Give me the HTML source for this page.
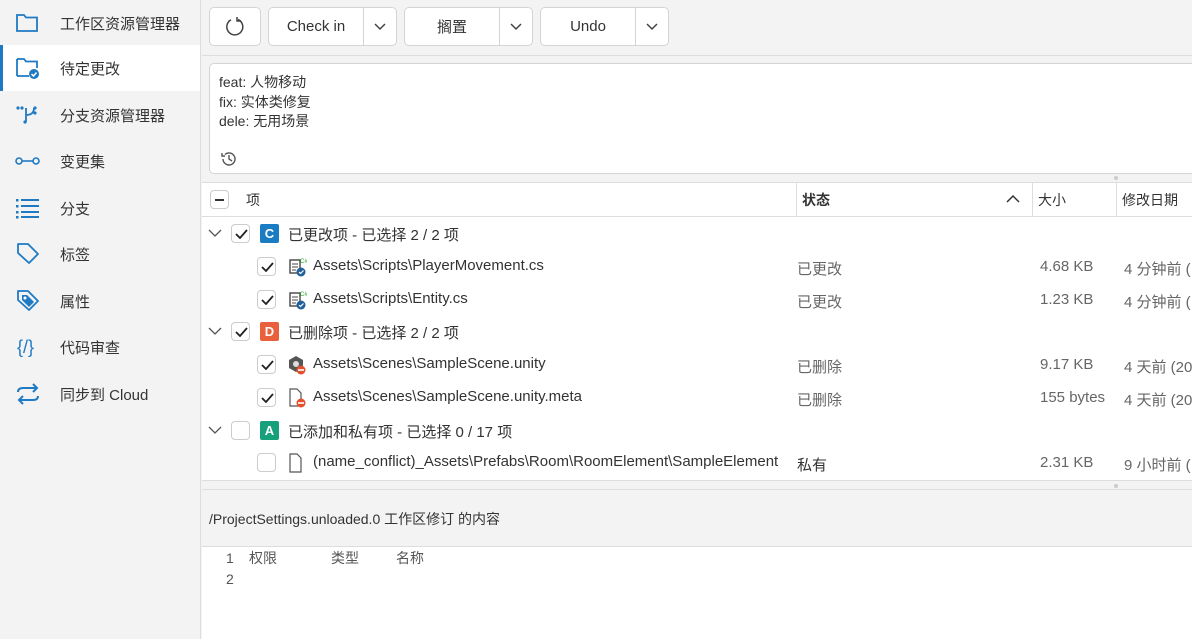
<!DOCTYPE html><html><head><meta charset="utf-8"><style>
*{box-sizing:border-box;margin:0;padding:0}
body{width:1192px;height:639px;overflow:hidden;background:#f3f3f3;font-family:"Liberation Sans","Noto Sans CJK SC",sans-serif;font-size:14px;color:#333;position:relative}
.a{position:absolute}
.side{left:0;top:0;width:201px;height:639px;background:#f3f3f3;border-right:1px solid #ddd}
.it{position:absolute;left:0;width:200px;height:46px;display:flex;align-items:center}
.it span{position:absolute;left:60px;font-size:15px;color:#333}
.it svg{position:absolute;left:15px}
.btn{position:absolute;top:7px;height:39px;background:#fff;border:1px solid #d4d4d4;border-radius:5px;display:flex;align-items:center;font-size:15px;color:#333}
.btn .l{flex:1;text-align:center}
.btn .r{width:33px;height:100%;border-left:1px solid #d4d4d4;display:flex;align-items:center;justify-content:center}
.cb{position:absolute;width:19px;height:19px;border:1px solid #ccc;border-radius:4px;background:#fff}
.row{position:absolute;left:202px;width:990px;height:33px}
.row .t{position:absolute;top:7px;font-size:15px;color:#333;white-space:nowrap}
.g{color:#666!important;font-size:15px!important;top:8px!important}
.badge{position:absolute;top:7px;width:19px;height:19px;color:#fff;font-weight:bold;font-size:13px;text-align:center;line-height:19px;border-radius:2px}
</style></head><body>
<div class="a side">
<div class="it" style="top:0"><svg width="24" height="22" viewBox="0 0 24 22"><path d="M2 3h7l2 2.5h11V19H2z" fill="none" stroke="#1f7ac4" stroke-width="1.8"/></svg><span>工作区资源管理器</span></div>
<div class="it" style="top:45px;background:#fff"><div class="a" style="left:0;top:0;width:3px;height:46px;background:#1f7ac4"></div><svg width="26" height="24" viewBox="0 0 26 24"><path d="M2 3h7l2 2.5h11V12M14 20H2z" fill="none" stroke="#1f7ac4" stroke-width="1.8"/><path d="M2 3v17" stroke="#1f7ac4" stroke-width="1.8"/><circle cx="19" cy="18" r="5" fill="#1f7ac4"/><path d="M16.5 18l2 2 3-3.5" fill="none" stroke="#fff" stroke-width="1.5"/></svg><span>待定更改</span></div>
<div class="it" style="top:92px"><svg width="24" height="24" viewBox="0 0 24 24"><g fill="#1f7ac4"><circle cx="3" cy="5" r="1.6"/><circle cx="7" cy="5" r="1.6"/><circle cx="20" cy="5" r="1.6"/><circle cx="20" cy="10" r="1.6"/><circle cx="10" cy="19" r="1.6"/></g><path d="M11 5v14M11 12c5 0 8-2 8-7" fill="none" stroke="#1f7ac4" stroke-width="1.8"/></svg><span>分支资源管理器</span></div>
<div class="it" style="top:138px"><svg width="26" height="12" viewBox="0 0 26 12"><circle cx="4" cy="6" r="3" fill="none" stroke="#1f7ac4" stroke-width="1.6"/><circle cx="21" cy="6" r="3" fill="none" stroke="#1f7ac4" stroke-width="1.6"/><path d="M7 6h11" stroke="#1f7ac4" stroke-width="1.6"/></svg><span>变更集</span></div>
<div class="it" style="top:185px"><svg width="26" height="22" viewBox="0 0 26 22"><g fill="#1f7ac4"><rect x="1" y="2" width="2.5" height="2.5"/><rect x="1" y="8" width="2.5" height="2.5"/><rect x="1" y="14" width="2.5" height="2.5"/><rect x="1" y="19" width="2.5" height="2.5"/><rect x="6" y="2" width="18" height="2"/><rect x="6" y="8" width="18" height="2"/><rect x="6" y="14" width="18" height="2"/><rect x="6" y="19" width="18" height="2"/></g></svg><span>分支</span></div>
<div class="it" style="top:231px"><svg width="26" height="26" viewBox="0 0 26 26"><path d="M3 3h10l10 10-9 9L3 12z" fill="none" stroke="#1f7ac4" stroke-width="1.8" stroke-linejoin="round"/></svg><span>标签</span></div>
<div class="it" style="top:278px"><svg width="26" height="26" viewBox="0 0 26 26"><path d="M3 3h10l10 10-9 9L3 12z" fill="none" stroke="#1f7ac4" stroke-width="1.8" stroke-linejoin="round"/><path d="M7 7h5l7 7-5 5-7-7z" fill="#1f7ac4"/><circle cx="10" cy="10" r="1.5" fill="#fff"/></svg><span>属性</span></div>
<div class="it" style="top:324px"><span style="left:17px;color:#1f7ac4;font-size:18px">{/}</span><span>代码审查</span></div>
<div class="it" style="top:371px"><svg width="26" height="22" viewBox="0 0 26 22"><path d="M3 9c0-3 2-4 5-4h14M18 1l4 4-4 4M23 13c0 3-2 4-5 4H4M8 13l-4 4 4 4" fill="none" stroke="#1f7ac4" stroke-width="2"/></svg><span>同步到 Cloud</span></div>
</div>
<div class="a" style="left:202px;top:55px;width:990px;height:1px;background:#ddd"></div>
<div class="btn" style="left:209px;width:52px;justify-content:center"><svg width="22" height="22" viewBox="0 0 22 22"><path d="M14 3.5A8 8 0 1 1 7 3.8" fill="none" stroke="#444" stroke-width="1.5"/><path d="M13 1v4h4" fill="none" stroke="#444" stroke-width="1.5"/></svg></div>
<div class="btn" style="left:268px;width:129px"><span class="l">Check in</span><span class="r"><svg width="12" height="8"><path d="M1 1l5 5 5-5" fill="none" stroke="#444" stroke-width="1.5"/></svg></span></div>
<div class="btn" style="left:404px;width:129px"><span class="l">搁置</span><span class="r"><svg width="12" height="8"><path d="M1 1l5 5 5-5" fill="none" stroke="#444" stroke-width="1.5"/></svg></span></div>
<div class="btn" style="left:540px;width:129px"><span class="l">Undo</span><span class="r"><svg width="12" height="8"><path d="M1 1l5 5 5-5" fill="none" stroke="#444" stroke-width="1.5"/></svg></span></div>
<div class="a" style="left:209px;top:63px;width:1000px;height:111px;background:#fff;border:1px solid #d4d4d4;border-radius:5px"></div>
<div class="a" style="left:219px;top:73px;font-size:14px;line-height:19.5px;color:#333">feat: 人物移动<br>fix: 实体类修复<br>dele: 无用场景</div>
<svg class="a" style="left:220px;top:150px" width="18" height="18" viewBox="0 0 18 18"><path d="M3 9a6 6 0 1 0 2-4.5" fill="none" stroke="#555" stroke-width="1.4"/><path d="M2 3v3h3M9 5v4l3 2" fill="none" stroke="#555" stroke-width="1.4"/></svg>
<div class="a" style="left:202px;top:182px;width:990px;height:298px;background:#fff;border-top:1px solid #ddd"></div>
<div class="a" style="left:1114px;top:176px;width:4px;height:4px;border-radius:2px;background:#ccc"></div>
<div class="a" style="left:202px;top:216px;width:990px;height:1px;background:#ddd"></div>
<div class="a" style="left:796px;top:183px;width:1px;height:33px;background:#ddd"></div>
<div class="a" style="left:1032px;top:183px;width:1px;height:33px;background:#ddd"></div>
<div class="a" style="left:1116px;top:183px;width:1px;height:33px;background:#ddd"></div>
<div class="cb" style="left:210px;top:190px"><div class="a" style="left:4px;top:8px;width:9px;height:2px;background:#333"></div></div>
<div class="a" style="left:246px;top:190px;font-size:14px">项</div>
<div class="a" style="left:802px;top:190px;font-size:14px;font-weight:bold">状态</div>
<svg class="a" style="left:1006px;top:194px" width="14" height="9"><path d="M1 8l6-6 6 6" fill="none" stroke="#333" stroke-width="1.5"/></svg>
<div class="a" style="left:1038px;top:190px;font-size:14px">大小</div>
<div class="a" style="left:1122px;top:190px;font-size:14px">修改日期</div>

<div class="row" style="top:217px"><svg class="a" style="left:6px;top:12px" width="14" height="8"><path d="M1 1l6 6 6-6" fill="none" stroke="#555" stroke-width="1.3"/></svg><div class="cb" style="left:29px;top:7px"></div><svg class="a" style="left:33px;top:12px" width="13" height="10"><path d="M1 5l4 4 7-8" fill="none" stroke="#222" stroke-width="1.8"/></svg><div class="badge" style="left:58px;background:#1a7dc4">C</div><span class="t" style="left:86px">已更改项 - 已选择 2 / 2 项</span></div>
<div class="row" style="top:250px"><div class="cb" style="left:55px;top:7px"></div><svg class="a" style="left:59px;top:12px" width="13" height="10"><path d="M1 5l4 4 7-8" fill="none" stroke="#222" stroke-width="1.8"/></svg><svg class="a" style="left:87px;top:7px" width="18" height="20"><rect x="1" y="3" width="10" height="13" fill="#fff" stroke="#444" stroke-width="1.4"/><path d="M3 7h6M3 10h6M3 13h4" stroke="#444"/><text x="11" y="6" font-size="6" fill="#2a2">C#</text><circle cx="12" cy="15" r="4.5" fill="#1f5f9a"/><path d="M10 15l1.5 1.5 3-3" fill="none" stroke="#fff" stroke-width="1.2"/></svg><span class="t" style="left:111px">Assets\Scripts\PlayerMovement.cs</span><span class="t g" style="left:595px">已更改</span><span class="t g" style="left:838px">4.68 KB</span><span class="t g" style="left:922px">4 分钟前 (</span></div>
<div class="row" style="top:283px"><div class="cb" style="left:55px;top:7px"></div><svg class="a" style="left:59px;top:12px" width="13" height="10"><path d="M1 5l4 4 7-8" fill="none" stroke="#222" stroke-width="1.8"/></svg><svg class="a" style="left:87px;top:7px" width="18" height="20"><rect x="1" y="3" width="10" height="13" fill="#fff" stroke="#444" stroke-width="1.4"/><path d="M3 7h6M3 10h6M3 13h4" stroke="#444"/><text x="11" y="6" font-size="6" fill="#2a2">C#</text><circle cx="12" cy="15" r="4.5" fill="#1f5f9a"/><path d="M10 15l1.5 1.5 3-3" fill="none" stroke="#fff" stroke-width="1.2"/></svg><span class="t" style="left:111px">Assets\Scripts\Entity.cs</span><span class="t g" style="left:595px">已更改</span><span class="t g" style="left:838px">1.23 KB</span><span class="t g" style="left:922px">4 分钟前 (</span></div>
<div class="row" style="top:315px"><svg class="a" style="left:6px;top:12px" width="14" height="8"><path d="M1 1l6 6 6-6" fill="none" stroke="#555" stroke-width="1.3"/></svg><div class="cb" style="left:29px;top:7px"></div><svg class="a" style="left:33px;top:12px" width="13" height="10"><path d="M1 5l4 4 7-8" fill="none" stroke="#222" stroke-width="1.8"/></svg><div class="badge" style="left:58px;background:#e8603c">D</div><span class="t" style="left:86px">已删除项 - 已选择 2 / 2 项</span></div>
<div class="row" style="top:348px"><div class="cb" style="left:55px;top:7px"></div><svg class="a" style="left:59px;top:12px" width="13" height="10"><path d="M1 5l4 4 7-8" fill="none" stroke="#222" stroke-width="1.8"/></svg><svg class="a" style="left:85px;top:6px" width="20" height="22"><path d="M9 2l7 4v8l-7 4-7-4V6z" fill="#555"/><circle cx="9" cy="10" r="3" fill="#ddd"/><circle cx="14" cy="16" r="4.5" fill="#e2502c"/><rect x="11" y="15.2" width="6" height="1.6" fill="#fff"/></svg><span class="t" style="left:111px">Assets\Scenes\SampleScene.unity</span><span class="t g" style="left:595px">已删除</span><span class="t g" style="left:838px">9.17 KB</span><span class="t g" style="left:922px">4 天前 (20</span></div>
<div class="row" style="top:381px"><div class="cb" style="left:55px;top:7px"></div><svg class="a" style="left:59px;top:12px" width="13" height="10"><path d="M1 5l4 4 7-8" fill="none" stroke="#222" stroke-width="1.8"/></svg><svg class="a" style="left:86px;top:6px" width="20" height="22"><path d="M2 2h7l4 4v13H2z" fill="#fff" stroke="#555" stroke-width="1.2"/><circle cx="13" cy="16" r="4.5" fill="#e2502c"/><rect x="10" y="15.2" width="6" height="1.6" fill="#fff"/></svg><span class="t" style="left:111px">Assets\Scenes\SampleScene.unity.meta</span><span class="t g" style="left:595px">已删除</span><span class="t g" style="left:838px">155 bytes</span><span class="t g" style="left:922px">4 天前 (20</span></div>
<div class="row" style="top:414px"><svg class="a" style="left:6px;top:12px" width="14" height="8"><path d="M1 1l6 6 6-6" fill="none" stroke="#555" stroke-width="1.3"/></svg><div class="cb" style="left:29px;top:7px"></div><div class="badge" style="left:58px;background:#17a07c">A</div><span class="t" style="left:86px">已添加和私有项 - 已选择 0 / 17 项</span></div>
<div class="row" style="top:446px;height:34px;overflow:hidden"><div class="cb" style="left:55px;top:7px"></div><svg class="a" style="left:86px;top:6px" width="16" height="22"><path d="M2 2h7l4 4v14H2z" fill="#fff" stroke="#555" stroke-width="1.2"/></svg><span class="t" style="left:111px;width:485px;overflow:hidden">(name_conflict)_Assets\Prefabs\Room\RoomElement\SampleElement</span><span class="t" style="left:595px;top:8px">私有</span><span class="t g" style="left:838px">2.31 KB</span><span class="t g" style="left:922px">9 小时前 (</span></div>
<div class="a" style="left:202px;top:480px;width:990px;height:1px;background:#ddd"></div>
<div class="a" style="left:1114px;top:484px;width:4px;height:4px;border-radius:2px;background:#ccc"></div>
<div class="a" style="left:202px;top:489px;width:990px;height:1px;background:#ddd"></div>
<div class="a" style="left:209px;top:509px;font-size:14px;color:#333">/ProjectSettings.unloaded.0 工作区修订 的内容</div>
<div class="a" style="left:202px;top:546px;width:990px;height:93px;background:#fff;border-top:1px solid #ddd"></div>
<div class="a" style="left:226px;top:548px;font-size:14px;line-height:21px;color:#555">1<br>2</div>
<div class="a" style="left:249px;top:548px;font-size:14px;line-height:21px;color:#555">权限</div>
<div class="a" style="left:331px;top:548px;font-size:14px;line-height:21px;color:#555">类型</div>
<div class="a" style="left:396px;top:548px;font-size:14px;line-height:21px;color:#555">名称</div>
</body></html>
